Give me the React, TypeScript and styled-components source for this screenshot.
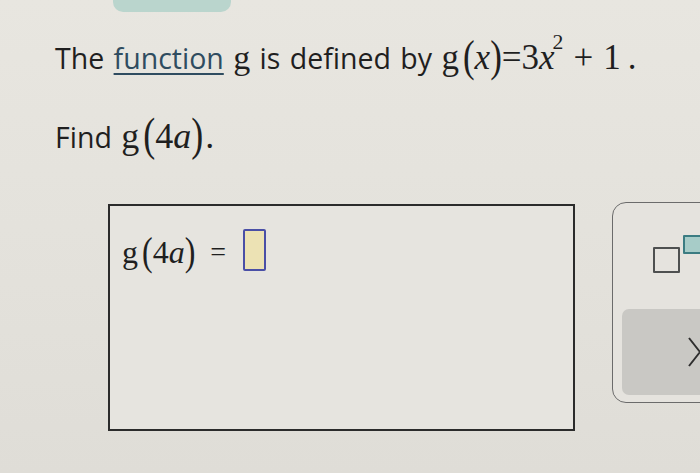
import React from "react";
import styled, { createGlobalStyle } from "styled-components";

const GlobalStyle = createGlobalStyle`
  html, body {
    margin: 0;
    padding: 0;
    background: #e3e1db;
  }
`;

const Page = styled.div`
  width: 700px;
  height: 473px;
  overflow: hidden;
  display: flex;
  flex-direction: column;
  background: linear-gradient(180deg, #e8e6e0 0%, #e3e1db 60%, #dfddd7 100%);
  font-family: "Open Sans", "DejaVu Sans", sans-serif;
  color: #1f1f1f;
`;

const TopTab = styled.div`
  margin-left: 113px;
  width: 118px;
  height: 12px;
  background: #bad5cd;
  border-radius: 0 0 10px 10px;
`;

const Prompt = styled.div<{ top: number }>`
  display: block;
  padding-left: 55px;
  font-size: 28.5px;
  word-spacing: 2px;
  height: 40px;
  line-height: 40px;
  margin-top: ${(p) => p.top}px;
  white-space: pre;
`;

const Link = styled.span`
  color: #2f4c60;
  text-decoration: underline;
  text-decoration-thickness: 2px;
  text-underline-offset: 4px;
`;

const Math = styled.span<{ size: number }>`
  font-family: "Liberation Serif", "Times New Roman", serif;
  font-size: ${(p) => p.size}px;
  white-space: pre;
  word-spacing: 0;
`;

const Var = styled.i`
  font-style: italic;
`;

const Fn = styled.span`
  margin-right: 4px;
`;

const Paren = styled.span`
  display: inline-block;
  transform: scale(1, 1.28);
  transform-origin: 50% 60%;
`;

const Op = styled.span<{ gap: number }>`
  margin: 0 ${(p) => p.gap}px;
`;

const Dot = styled.span<{ gap: number }>`
  margin-left: ${(p) => p.gap}px;
`;

const Sup = styled.sup`
  font-size: 0.62em;
  vertical-align: 0.92em;
  line-height: 0;
  margin-left: -2px;
`;

const Workspace = styled.div`
  display: flex;
  align-items: flex-start;
  gap: 37px;
  margin-top: 48px;
  padding-left: 108px;
`;

const AnswerBox = styled.div`
  flex: 0 0 auto;
  width: 451px;
  height: 199px;
  border: 2px solid #2b2b2b;
  background: #e6e4df;
  padding: 24px 0 0 12px;
  box-sizing: content-box;
`;

const AnswerLine = styled.div`
  display: flex;
  align-items: center;
  gap: 15px;
  height: 44px;
`;

const Blank = styled.span`
  display: inline-block;
  width: 19px;
  height: 38px;
  margin-top: -4px;
  margin-left: 2px;
  border: 2px solid #4a4fa6;
  background: #ece2b4;
  border-radius: 2px;
`;

const SidePanel = styled.div`
  flex: 0 0 auto;
  width: 120px;
  height: 201px;
  margin-top: -2px;
  border: 1.5px solid #6b6b6b;
  border-radius: 14px;
  background: #e5e3de;
  display: flex;
  flex-direction: column;
  padding: 32px 0 0 9px;
  box-sizing: border-box;
`;

const ExponentIcon = styled.div`
  display: flex;
  align-items: flex-start;
  padding-left: 31px;
  gap: 3px;
  height: 40px;
`;

const BaseSquare = styled.span`
  margin-top: 12px;
  width: 23px;
  height: 22px;
  border: 2px solid #4e5050;
  border-radius: 1px;
`;

const PowerSquare = styled.span`
  width: 15px;
  height: 15px;
  border: 2px solid #3b7c82;
  background: #a7ccc8;
  border-radius: 1px;
`;

const NextButton = styled.div`
  margin-top: 34px;
  height: 86px;
  border-radius: 7px;
  background: #c9c8c4;
  display: flex;
  align-items: center;
  padding-left: 66px;
  color: #2e2e2e;
`;

export default function App() {
  return (
    <>
      <GlobalStyle />
      <Page>
        <TopTab />
        <Prompt top={26}>
          The <Link>function</Link>{" "}
          <Math size={34}>g</Math> is defined by{" "}
          <Math size={35}>
            <Fn>g</Fn>
            <Paren>(</Paren>
            <Var>x</Var>
            <Paren>)</Paren>=3<Var>x</Var>
            <Sup>2</Sup>
            <Op gap={10}>+</Op>1<Dot gap={7}>.</Dot>
          </Math>
        </Prompt>
        <Prompt top={38}>
          Find{" "}
          <Math size={36}>
            <Fn>g</Fn>
            <Paren>(</Paren>4<Var>a</Var>
            <Paren>)</Paren>
            <Dot gap={2}>.</Dot>
          </Math>
        </Prompt>
        <Workspace>
          <AnswerBox>
            <AnswerLine>
              <Math size={32}>
                <Fn>g</Fn>
                <Paren>(</Paren>4<Var>a</Var>
                <Paren>)</Paren>
              </Math>
              <Math size={28}>=</Math>
              <Blank />
            </AnswerLine>
          </AnswerBox>
          <SidePanel>
            <ExponentIcon>
              <BaseSquare />
              <PowerSquare />
            </ExponentIcon>
            <NextButton>
              <svg width="14" height="30" viewBox="0 0 14 30">
                <polyline
                  points="1,1 12,15 1,29"
                  fill="none"
                  stroke="#2e2e2e"
                  strokeWidth="2"
                />
              </svg>
            </NextButton>
          </SidePanel>
        </Workspace>
      </Page>
    </>
  );
}
